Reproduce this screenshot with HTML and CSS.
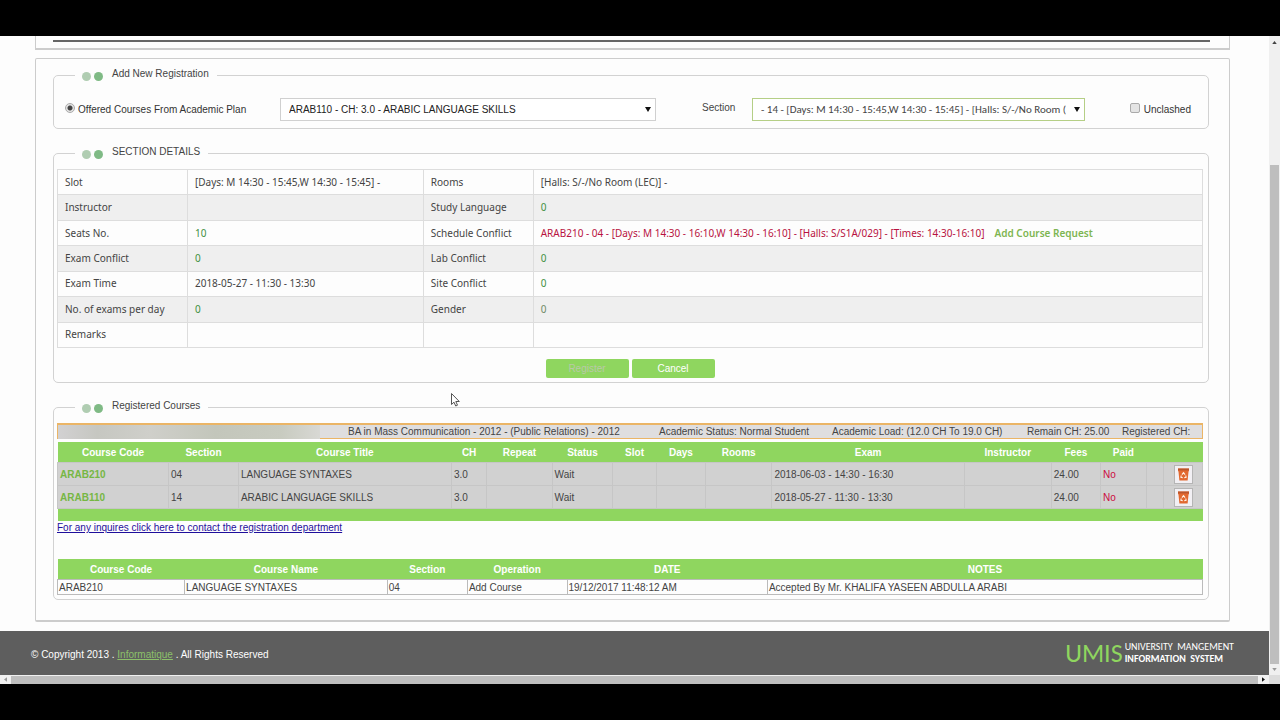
FILE: index.html
```html
<!DOCTYPE html>
<html lang="en">
  <head>
    <meta charset="UTF-8" />
    <meta name="viewport" content="width=device-width, initial-scale=1.0" />
    <title>Course Registration</title>
    <link rel="stylesheet" href="styles.css">
  </head>
  <body>
    <div class="window">
      <div class="page">
        <div class="top-panel"><hr></div>

        <main class="panel">
          <fieldset class="box">
            <legend><span class="dot light"></span><span class="dot"></span>Add New Registration</legend>
            <div class="filters">
              <div class="check first">
                <input type="radio" id="offered" name="source" checked>
                <label for="offered">Offered Courses From Academic Plan</label>
              </div>
              <div class="select">
                <select id="course" aria-label="Course">
                  <option>ARAB110 - CH: 3.0 - ARABIC LANGUAGE SKILLS</option>
                </select>
              </div>
              <label class="section-label" for="section">Section</label>
              <div class="select active">
                <select id="section">
                  <option>- 14 - [Days: M 14:30 - 15:45,W 14:30 - 15:45] - [Halls: S/-/No Room (LEC)] -</option>
                </select>
              </div>
              <div class="check last">
                <input type="checkbox" id="unclashed">
                <label for="unclashed">Unclashed</label>
              </div>
            </div>
          </fieldset>

          <fieldset class="box">
            <legend><span class="dot light"></span><span class="dot"></span>SECTION DETAILS</legend>
            <table class="details">
              <colgroup><col class="c1"><col class="c2"><col class="c3"><col></colgroup>
              <tr><th>Slot</th><td>[Days: M 14:30 - 15:45,W 14:30 - 15:45] -</td><th>Rooms</th><td>[Halls: S/-/No Room (LEC)] -</td></tr>
              <tr><th>Instructor</th><td></td><th>Study Language</th><td class="num">0</td></tr>
              <tr><th>Seats No.</th><td class="num">10</td><th>Schedule Conflict</th><td><span class="conflict">ARAB210 - 04 - [Days: M 14:30 - 16:10,W 14:30 - 16:10] - [Halls: S/S1A/029] - [Times: 14:30-16:10]</span><a class="request" href="#">Add Course Request</a></td></tr>
              <tr><th>Exam Conflict</th><td class="num">0</td><th>Lab Conflict</th><td class="num">0</td></tr>
              <tr><th>Exam Time</th><td>2018-05-27 - 11:30 - 13:30</td><th>Site Conflict</th><td class="num">0</td></tr>
              <tr><th>No. of exams per day</th><td class="num">0</td><th>Gender</th><td class="num muted">0</td></tr>
              <tr><th>Remarks</th><td></td><th></th><td></td></tr>
            </table>
            <div class="buttons">
              <button type="button" disabled>Register</button>
              <button type="button">Cancel</button>
            </div>
          </fieldset>

          <fieldset class="box">
            <legend><span class="dot light"></span><span class="dot"></span>Registered Courses</legend>
            <div class="student">
              <span class="hidden-name"></span>
              <span>BA in Mass Communication - 2012 - (Public Relations) - 2012</span>
              <span>Academic Status: Normal Student</span>
              <span>Academic Load: (12.0 CH To 19.0 CH)</span>
              <span>Remain CH: 25.00</span>
              <span>Registered CH:</span>
            </div>
            <table class="courses">
              <thead>
                <tr>
                  <th>Course Code</th><th>Section</th><th>Course Title</th><th>CH</th><th>Repeat</th><th>Status</th><th>Slot</th><th>Days</th><th>Rooms</th><th>Exam</th><th>Instructor</th><th>Fees</th><th>Paid</th><th></th><th></th>
                </tr>
              </thead>
              <tbody>
                <tr>
                  <td><a href="#">ARAB210</a></td><td>04</td><td>LANGUAGE SYNTAXES</td><td>3.0</td><td></td><td>Wait</td><td></td><td></td><td></td><td>2018-06-03 - 14:30 - 16:30</td><td></td><td>24.00</td><td class="no">No</td><td></td>
                  <td class="action"><button type="button" class="delete" aria-label="Delete ARAB210"><svg viewBox="0 0 12 14"><path d="M0 0h12v3h-.5L10.500 13h-9L.5 3H0z" fill="#e2682f"/><path d="M0 0h12v2H0z" fill="#b9552c"/><path d="M4.300 6.500 6 4.500l1.700 2M8.500 7.500l.3 2-2 .5M3.500 7.500l-.3 2 2 .5" fill="none" stroke="#fff3e8" stroke-width="1.200"/></svg></button></td>
                </tr>
                <tr>
                  <td><a href="#">ARAB110</a></td><td>14</td><td>ARABIC LANGUAGE SKILLS</td><td>3.0</td><td></td><td>Wait</td><td></td><td></td><td></td><td>2018-05-27 - 11:30 - 13:30</td><td></td><td>24.00</td><td class="no">No</td><td></td>
                  <td class="action"><button type="button" class="delete" aria-label="Delete ARAB110"><svg viewBox="0 0 12 14"><path d="M0 0h12v3h-.5L10.500 13h-9L.5 3H0z" fill="#e2682f"/><path d="M0 0h12v2H0z" fill="#b9552c"/><path d="M4.300 6.500 6 4.500l1.700 2M8.500 7.500l.3 2-2 .5M3.500 7.500l-.3 2 2 .5" fill="none" stroke="#fff3e8" stroke-width="1.200"/></svg></button></td>
                </tr>
              </tbody>
              <tfoot>
                <tr><td colspan="15"></td></tr>
              </tfoot>
            </table>
            <a class="contact" href="#">For any inquires click here to contact the registration department</a>
            <table class="log">
              <thead>
                <tr><th>Course Code</th><th>Course Name</th><th>Section</th><th>Operation</th><th>DATE</th><th>NOTES</th></tr>
              </thead>
              <tbody>
                <tr><td>ARAB210</td><td>LANGUAGE SYNTAXES</td><td>04</td><td>Add Course</td><td>19/12/2017 11:48:12 AM</td><td>Accepted By Mr. KHALIFA YASEEN ABDULLA ARABI</td></tr>
              </tbody>
            </table>
          </fieldset>
        </main>

        <footer class="footer">
          <p>© Copyright 2013 . <a href="#">Informatique</a> . All Rights Reserved</p>
          <div class="logo">
            <span class="logo-name">UMIS</span>
            <span class="logo-text">UNIVERSITY&nbsp; MANGEMENT<br><b>INFORMATION&nbsp; SYSTEM</b></span>
          </div>
        </footer>
      </div>

      <div class="vscroll">
        <svg class="arrow" viewBox="0 0 6 4"><path d="M3 0 6 4H0z" fill="#444"/></svg>
        <div class="track"><div class="thumb"></div></div>
        <svg class="arrow" viewBox="0 0 6 4"><path d="M0 0h6L3 4z" fill="#999"/></svg>
      </div>
      <div class="hscroll">
        <svg class="arrow" viewBox="0 0 4 6"><path d="M4 0v6L0 3z" fill="#999"/></svg>
        <div class="thumb"></div>
        <svg class="arrow" viewBox="0 0 4 6"><path d="M0 0v6l4-3z" fill="#111"/></svg>
      </div>
      <div class="corner"></div>
    </div>

    <svg class="cursor" viewBox="0 0 9 14"><path d="M.5.5v11l2.500-2.300 1.700 3.800 1.800-.8-1.700-3.700h3.500z" fill="#fff" stroke="#555"/></svg>
  </body>
</html>
```

FILE: styles.css
```css
* {
  box-sizing: border-box;
}
body {
  margin: 0;
  min-height: 100vh;
  padding: 36px 0;
  display: flex;
  background: #000;
  color: #444;
  font: 10px/13px "Liberation Sans", Arial, sans-serif;
}
.window {
  flex: 1;
  display: grid;
  grid-template-columns: 1fr 11px;
  grid-template-rows: 1fr 9px;
  background: #fdfdfd;
}
.page {
  display: flex;
  flex-direction: column;
  min-width: 0;
}

/* panels */
.top-panel {
  margin: 0 39px 8px 35px;
  padding: 4px 19px 6px 17px;
  border: 1px solid #ccc;
  border-top: 0;
  border-bottom-width: 2px;
}
.top-panel hr {
  margin: 0;
  border: 0;
  border-top: 2px solid #666;
}
.panel {
  margin: 0 39px 9px 35px;
  padding: 8px 20px 20px 17px;
  border: 1px solid #ccc;
  border-bottom-width: 2px;
  border-radius: 2px;
}
.box {
  min-width: 0;
  margin: 0 0 16px;
  padding: 8px 5px 4px 3px;
  border: 1px solid #d2d2d2;
  border-radius: 5px;
}
.box:last-child {
  margin-bottom: 0;
}
legend {
  display: flex;
  gap: 3px;
  height: 16px;
  margin-left: 18px;
  padding: 0 8px 0 7px;
  line-height: 14px;
}
.dot {
  width: 9px;
  height: 9px;
  margin-top: 5px;
  border-radius: 50%;
  background: #7fba85;
}
.dot + .dot {
  margin-right: 6px;
}
.dot.light {
  background: #b0cdb2;
}

/* filters */
.filters {
  display: grid;
  grid-template-columns: 223fr 376fr 96fr 333fr 118fr;
  align-items: center;
  padding: 7px 0 3px;
}
.check {
  display: flex;
  align-items: center;
  gap: 3px;
  color: #333;
  white-space: nowrap;
}
.check.first {
  padding-left: 8px;
}
.check.last {
  justify-content: flex-end;
  gap: 4px;
  padding-right: 12px;
}
.check input {
  appearance: none;
  width: 10px;
  height: 10px;
  margin: 0 0 4px;
  border: 1px solid #aaa;
  border-radius: 2px;
  background: #e4e4e4;
}
.check input[type="radio"] {
  border-radius: 50%;
}
.check input[type="radio"]:checked {
  background: radial-gradient(circle, #444 2px, #e4e4e4 3px);
}
.check input[type="checkbox"]:checked {
  background: #777;
}
.section-label {
  padding: 0 0 5px 46px;
}
.select {
  position: relative;
}
.select::after {
  content: "";
  position: absolute;
  right: 5px;
  top: 9px;
  border: 3px solid transparent;
  border-top: 5px solid #111;
  border-bottom: 0;
  pointer-events: none;
}
select {
  appearance: none;
  display: block;
  width: 100%;
  height: 23px;
  padding: 0 18px 0 8px;
  border: 1px solid #d0d0d0;
  border-radius: 0;
  background: #fff;
  color: #222;
  font: inherit;
}
.active select {
  border-color: #b5cf86;
  color: #444;
  font-family: Carlito, Lato, sans-serif;
  font-size: 11px;
}

/* tables */
table {
  width: 100%;
  table-layout: fixed;
  border-collapse: collapse;
}
td,
th {
  white-space: nowrap;
}
.details {
  height: 179px;
  font-family: "Noto Sans", sans-serif;
}
.details .c1 {
  width: 11.35%;
}
.details .c2 {
  width: 20.6%;
}
.details .c3 {
  width: 9.6%;
}
.details th,
.details td {
  padding: 0 7px;
  border: 1px solid #ddd;
  text-align: left;
  font-weight: normal;
}
.details tr:nth-child(even) {
  background: #efefef;
}
.details .num {
  color: #3f8f3f;
}
.details .muted {
  color: #6f8a66;
}
.details .conflict {
  color: #b8123f;
}
.request {
  margin-left: 10px;
  color: #7db551;
  font-weight: 600;
  text-decoration: none;
}
.buttons {
  display: flex;
  justify-content: center;
  gap: 3px;
  padding-top: 11px;
}
.buttons button {
  width: 83px;
  height: 19px;
  padding: 0;
  border: 0;
  border-radius: 2px;
  background: #8fd65f;
  color: #fff;
  font: inherit;
}
.buttons button:disabled {
  color: #b9c9a8;
}

.student {
  display: grid;
  grid-template-columns: 290fr 311fr 173fr 195fr 95fr 80fr;
  height: 16px;
  margin-bottom: 3px;
  border: 1px solid #ebb566;
  border-top-width: 2px;
  background: #dfdedf;
  line-height: 13px;
  white-space: nowrap;
}
.hidden-name {
  height: 14px;
  margin-right: 28px;
  background: linear-gradient(90deg, #d2d1d2, #c6c7c1 15%, #cfcfca 35%, #c3c6bb 60%, #c8cbc0 85%, #d8d8d4);
}
.courses th,
.log th {
  height: 20px;
  padding: 2px 0 0;
  background: #8fd65f;
  color: #fff;
}
.courses tbody td {
  height: 23px;
  padding: 2px 2px 0;
  border: 1px solid #c6c6c6;
  background: #d1d1d1;
}
.courses tfoot td {
  height: 13px;
  padding: 0;
  background: #8fd65f;
}
.courses th:nth-child(1) { width: 9.7%; }
.courses th:nth-child(2) { width: 6.1%; }
.courses th:nth-child(3) { width: 18.6%; }
.courses th:nth-child(4) { width: 3.1%; }
.courses th:nth-child(5) { width: 5.7%; }
.courses th:nth-child(6) { width: 5.3%; }
.courses th:nth-child(7) { width: 3.8%; }
.courses th:nth-child(8) { width: 4.3%; }
.courses th:nth-child(9) { width: 5.8%; }
.courses th:nth-child(10) { width: 16.8%; }
.courses th:nth-child(11) { width: 7.6%; }
.courses th:nth-child(12) { width: 4.3%; }
.courses th:nth-child(13) { width: 4%; }
.courses th:nth-child(14) { width: 1.5%; }
.courses td a {
  color: #76b744;
  font-weight: bold;
  text-decoration: none;
}
.courses .no {
  color: #cc0a40;
}
.courses .action {
  text-align: center;
}
.delete {
  display: block;
  width: 19px;
  height: 19px;
  margin: 0 auto;
  padding: 2px 3px;
  border: 1px solid #b5b5b5;
  background: #f2f0f4;
}
.delete svg {
  display: block;
  width: 11px;
  height: 14px;
}
.contact {
  display: block;
  width: max-content;
  margin-bottom: 25px;
  color: #1f0f9c;
}
.log td {
  height: 15px;
  padding: 2px 1px 0;
  border: 1px solid #bbb;
  line-height: 12px;
}
.log th:nth-child(1) { width: 11.1%; }
.log th:nth-child(2) { width: 17.7%; }
.log th:nth-child(3) { width: 7%; }
.log th:nth-child(4) { width: 8.7%; }
.log th:nth-child(5) { width: 17.5%; }

/* footer */
.footer {
  flex: 1;
  display: flex;
  align-items: center;
  justify-content: space-between;
  padding: 0 35px 0 31px;
  background: #5e5e5e;
  color: #fff;
}
.footer p {
  margin: 3px 0 0;
}
.footer a {
  color: #8cc06a;
}
.logo {
  display: flex;
  align-items: center;
  gap: 2px;
  font-family: Lato, sans-serif;
}
.logo-name {
  color: #8fd65f;
  font-family: Carlito, Lato, sans-serif;
  font-size: 26px;
  line-height: 24px;
}
.logo-text {
  font-family: Carlito, Lato, sans-serif;
  font-size: 10px;
  line-height: 12px;
}

/* scrollbars */
.arrow {
  flex: none;
  display: block;
}
.vscroll {
  grid-column: 2;
  grid-row: 1;
  display: flex;
  flex-direction: column;
  align-items: center;
  gap: 4px;
  padding: 5px 0 4px;
  background: #f0f0f0;
}
.vscroll .arrow {
  width: 5px;
  height: 3px;
}
.track {
  flex: 1;
  width: 9px;
  display: flex;
  align-items: flex-end;
}
.vscroll .thumb {
  width: 100%;
  height: 81%;
  background: #bebebe;
}
.hscroll {
  display: flex;
  align-items: center;
  gap: 4px;
  padding: 0 4px;
  background: #f0f0f0;
}
.hscroll .arrow {
  width: 3px;
  height: 5px;
}
.hscroll .thumb {
  flex: 1;
  height: 8px;
  background: #bebebe;
}
.corner {
  background: #ddd;
}
.cursor {
  position: absolute;
  left: 451px;
  top: 393px;
  width: 9px;
  height: 14px;
}
```
